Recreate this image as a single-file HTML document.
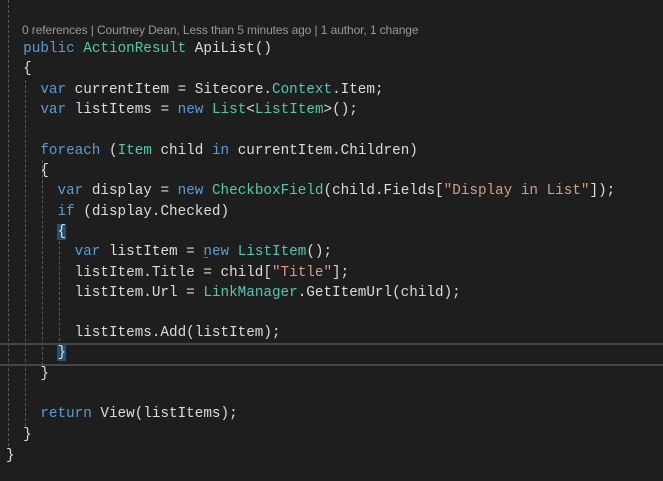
<!DOCTYPE html>
<html><head><style>
html,body{margin:0;padding:0;background:#1e1e1e;width:663px;height:481px;overflow:hidden;position:relative}
.l{position:absolute;left:6px;white-space:pre;font-family:"Liberation Mono",monospace;font-size:14.3px;line-height:20px;height:20px;color:#dcdcdc}
.k{color:#569cd6}.t{color:#4ec9b0}.s{color:#d69d85}
.g{position:absolute;width:0;border-left:1px dashed #5a5a5a}
.cl{position:absolute;left:22px;top:23px;font-family:"Liberation Sans",sans-serif;font-size:12px;letter-spacing:-0.1px;color:#999;white-space:pre}
.cur{position:absolute;left:0;width:663px;top:343px;height:19px;border-top:2px solid #464646;border-bottom:2px solid #464646}
.br{background:#264f78}
.dots{position:absolute;left:203px;top:250px;color:#999;font-family:"Liberation Sans",sans-serif;font-size:9px;line-height:10px;letter-spacing:-1px}
</style></head><body>
<div class="g" style="left:8px;top:0;height:446px"></div>
<div class="g" style="left:25px;top:80px;height:346px"></div>
<div class="g" style="left:42px;top:160px;height:205px"></div>
<div class="g" style="left:59px;top:241px;height:100px"></div>
<div class="cur"></div>
<div class="cl">0 references | Courtney Dean, Less than 5 minutes ago | 1 author, 1 change</div>
<div class="l" style="top:39px">  <span class="k">public</span> <span class="t">ActionResult</span> ApiList()</div>
<div class="l" style="top:59px">  {</div>
<div class="l" style="top:80px">    <span class="k">var</span> currentItem = Sitecore.<span class="t">Context</span>.Item;</div>
<div class="l" style="top:100px">    <span class="k">var</span> listItems = <span class="k">new</span> <span class="t">List</span>&lt;<span class="t">ListItem</span>&gt;();</div>
<div class="l" style="top:141px">    <span class="k">foreach</span> (<span class="t">Item</span> child <span class="k">in</span> currentItem.Children)</div>
<div class="l" style="top:161px">    {</div>
<div class="l" style="top:181px">      <span class="k">var</span> display = <span class="k">new</span> <span class="t">CheckboxField</span>(child.Fields[<span class="s">"Display in List"</span>]);</div>
<div class="l" style="top:202px">      <span class="k">if</span> (display.Checked)</div>
<div class="l" style="top:222px">      <span class="br">{</span></div>
<div class="l" style="top:242px">        <span class="k">var</span> listItem = <span class="k">new</span> <span class="t">ListItem</span>();</div>
<div class="dots">...</div>
<div class="l" style="top:263px">        listItem.Title = child[<span class="s">"Title"</span>];</div>
<div class="l" style="top:283px">        listItem.Url = <span class="t">LinkManager</span>.GetItemUrl(child);</div>
<div class="l" style="top:323px">        listItems.Add(listItem);</div>
<div class="l" style="top:343px">      <span class="br">}</span></div>
<div class="l" style="top:364px">    }</div>
<div class="l" style="top:404px">    <span class="k">return</span> View(listItems);</div>
<div class="l" style="top:425px">  }</div>
<div class="l" style="top:446px">}</div>
</body></html>
